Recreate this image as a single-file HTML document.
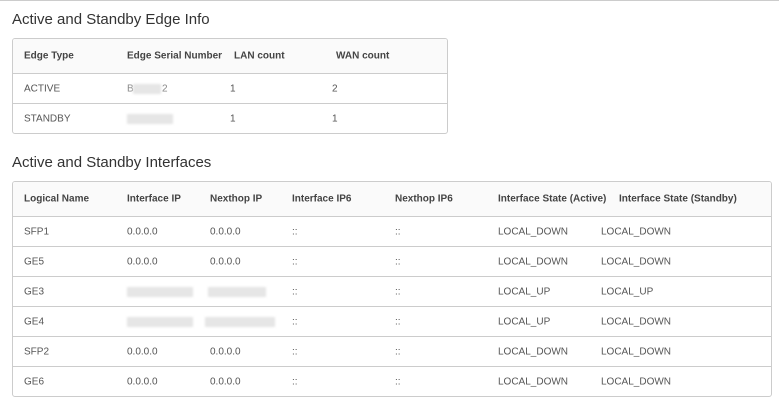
<!DOCTYPE html>
<html><head><meta charset="utf-8"><style>
*{margin:0;padding:0;box-sizing:border-box}
body{width:779px;height:402px;background:#fff;font-family:"Liberation Sans",Arial,sans-serif;position:relative;overflow:hidden;border-top:1px solid #ccc}
.h{position:absolute;left:12px;font-size:15px;color:#333;font-weight:normal}
.t{position:absolute;border:1px solid #ccc;border-radius:3px;overflow:hidden;background:#fff}
.r{position:relative;height:30px;border-top:1px solid #ccc;font-size:10px;color:#555}
.r.hd{height:34px;border-top:none;background:#fafafa;color:#444;font-weight:bold}
.r span{position:absolute;top:50%;transform:translateY(-50%);white-space:nowrap}
.blur{position:absolute;top:50%;transform:translateY(-50%);height:10px;background:#e6e6e6;filter:blur(1px)}
</style></head><body>
<div class="h" style="top:10px">Active and Standby Edge Info</div>
<div class="t" style="left:12px;top:37px;width:436px;height:96px">
 <div class="r hd"><span style="left:11px">Edge Type</span><span style="left:114px">Edge Serial Number</span><span style="left:221px">LAN count</span><span style="left:323px">WAN count</span></div>
 <div class="r"><span style="left:11px">ACTIVE</span><span style="left:114px;color:#888">B</span><div class="blur" style="left:120px;width:28px"></div><span style="left:149px;color:#888">2</span><span style="left:217px">1</span><span style="left:319px">2</span></div>
 <div class="r"><span style="left:11px">STANDBY</span><div class="blur" style="left:114px;width:46px"></div><span style="left:217px">1</span><span style="left:319px">1</span></div>
</div>
<div class="h" style="top:153px">Active and Standby Interfaces</div>
<div class="t" style="left:12px;top:180px;width:760px;height:216px">
 <div class="r hd"><span style="left:11px">Logical Name</span><span style="left:114px">Interface IP</span><span style="left:197px">Nexthop IP</span><span style="left:279px">Interface IP6</span><span style="left:382px">Nexthop IP6</span><span style="left:485px">Interface State (Active)</span><span style="left:606px">Interface State (Standby)</span></div>
 <div class="r"><span style="left:11px">SFP1</span><span style="left:114px">0.0.0.0</span><span style="left:197px">0.0.0.0</span><span style="left:279px">::</span><span style="left:382px">::</span><span style="left:485px">LOCAL_DOWN</span><span style="left:588px">LOCAL_DOWN</span></div>
 <div class="r"><span style="left:11px">GE5</span><span style="left:114px">0.0.0.0</span><span style="left:197px">0.0.0.0</span><span style="left:279px">::</span><span style="left:382px">::</span><span style="left:485px">LOCAL_DOWN</span><span style="left:588px">LOCAL_DOWN</span></div>
 <div class="r"><span style="left:11px">GE3</span><div class="blur" style="left:114px;width:66px"></div><div class="blur" style="left:195px;width:58px"></div><span style="left:279px">::</span><span style="left:382px">::</span><span style="left:485px">LOCAL_UP</span><span style="left:588px">LOCAL_UP</span></div>
 <div class="r"><span style="left:11px">GE4</span><div class="blur" style="left:114px;width:66px"></div><div class="blur" style="left:192px;width:70px"></div><span style="left:279px">::</span><span style="left:382px">::</span><span style="left:485px">LOCAL_UP</span><span style="left:588px">LOCAL_DOWN</span></div>
 <div class="r"><span style="left:11px">SFP2</span><span style="left:114px">0.0.0.0</span><span style="left:197px">0.0.0.0</span><span style="left:279px">::</span><span style="left:382px">::</span><span style="left:485px">LOCAL_DOWN</span><span style="left:588px">LOCAL_DOWN</span></div>
 <div class="r"><span style="left:11px">GE6</span><span style="left:114px">0.0.0.0</span><span style="left:197px">0.0.0.0</span><span style="left:279px">::</span><span style="left:382px">::</span><span style="left:485px">LOCAL_DOWN</span><span style="left:588px">LOCAL_DOWN</span></div>
</div>
</body></html>
